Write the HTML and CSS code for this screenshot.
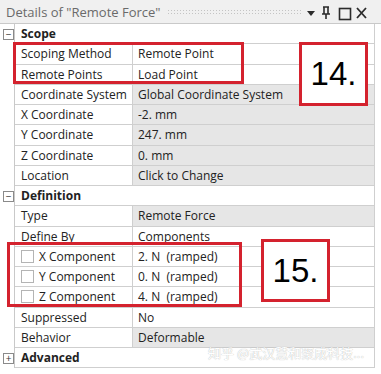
FILE: index.html
```html
<!DOCTYPE html>
<html lang="en">
<head>
    <meta charset="UTF-8">
    <title>Details of "Remote Force"</title>
    <link rel="stylesheet" href="styles.css">
</head>
<body>
    <div class="panel">
        <div class="titlebar">
            <span class="title">Details of "Remote Force"</span>
            <span class="grip"></span>
            <span class="tools">
                <svg width="66" height="16" viewBox="0 0 66 16">
                    <path d="M2 6 L10 6 L6 11 Z" fill="#2b2b2b"/>
                    <path d="M18 2 H24 M19 2 V9 M23 2 V9 M17 9 H25 M21 9 V14" stroke="#2b2b2b" stroke-width="1.6" fill="none"/>
                    <rect x="34.5" y="3.5" width="11" height="11" stroke="#2b2b2b" stroke-width="1.6" fill="none"/>
                    <path d="M52 3 L61 13 M61 3 L52 13" stroke="#2b2b2b" stroke-width="1.8" fill="none"/>
                </svg>
            </span>
        </div>

        <div class="grid">
            <div class="row head">
                <span class="gutter"><span class="toggle">&minus;</span></span>
                <span class="cell span">Scope</span>
            </div>
            <div class="row">
                <span class="gutter"></span>
                <span class="cell name">Scoping Method</span>
                <span class="cell value">Remote Point</span>
            </div>
            <div class="row">
                <span class="gutter"></span>
                <span class="cell name">Remote Points</span>
                <span class="cell value">Load Point</span>
            </div>
            <div class="row">
                <span class="gutter"></span>
                <span class="cell name">Coordinate System</span>
                <span class="cell value ro">Global Coordinate System</span>
            </div>
            <div class="row">
                <span class="gutter"></span>
                <span class="cell name">X Coordinate</span>
                <span class="cell value ro">-2. mm</span>
            </div>
            <div class="row">
                <span class="gutter"></span>
                <span class="cell name">Y Coordinate</span>
                <span class="cell value ro">247. mm</span>
            </div>
            <div class="row">
                <span class="gutter"></span>
                <span class="cell name">Z Coordinate</span>
                <span class="cell value ro">0. mm</span>
            </div>
            <div class="row">
                <span class="gutter"></span>
                <span class="cell name">Location</span>
                <span class="cell value ro">Click to Change</span>
            </div>
            <div class="row head">
                <span class="gutter"><span class="toggle">&minus;</span></span>
                <span class="cell span">Definition</span>
            </div>
            <div class="row">
                <span class="gutter"></span>
                <span class="cell name">Type</span>
                <span class="cell value ro">Remote Force</span>
            </div>
            <div class="row">
                <span class="gutter"></span>
                <span class="cell name">Define By</span>
                <span class="cell value">Components</span>
            </div>
            <div class="row">
                <span class="gutter"></span>
                <span class="cell name"><span class="check"></span>X Component</span>
                <span class="cell value">2. N  (ramped)</span>
            </div>
            <div class="row">
                <span class="gutter"></span>
                <span class="cell name"><span class="check"></span>Y Component</span>
                <span class="cell value">0. N  (ramped)</span>
            </div>
            <div class="row">
                <span class="gutter"></span>
                <span class="cell name"><span class="check"></span>Z Component</span>
                <span class="cell value">4. N  (ramped)</span>
            </div>
            <div class="row">
                <span class="gutter"></span>
                <span class="cell name">Suppressed</span>
                <span class="cell value">No</span>
            </div>
            <div class="row">
                <span class="gutter"></span>
                <span class="cell name">Behavior</span>
                <span class="cell value ro">Deformable</span>
            </div>
            <div class="row head">
                <span class="gutter"><span class="toggle">+</span></span>
                <span class="cell span">Advanced</span>
            </div>
        </div>

        <div class="mark box-a"></div>
        <div class="mark box-b">14.</div>
        <div class="mark box-c"></div>
        <div class="mark box-d">15.</div>
        <div class="watermark">知乎 @武汉慧和聚成科技...</div>
    </div>
</body>
</html>
```

FILE: styles.css
```css
/* Panel de detalles estilo Mechanical */
body {
    margin: 0;
    background-color: #fff;
    font-family: "Open Sans", "Noto Sans", sans-serif;
    color: #222;
}

.panel {
    position: relative;
    width: 381px;
    height: 374px;
    overflow: hidden;
}

.titlebar {
    display: flex;
    align-items: center;
    height: 24px;
    box-sizing: border-box;
    padding: 0 10px 0 6px;
    background-color: #f0f0f0;
    border-bottom: 1px solid #c9c9c9;
}

.title {
    font-size: 13px;
    color: #6a6a6a;
    white-space: nowrap;
}

.grip {
    flex-grow: 1;
    height: 6px;
    margin: 0 4px 0 6px;
    background-image: radial-gradient(#c4c4c4 0.6px, transparent 0.8px);
    background-size: 3px 3px;
}

.tools {
    display: flex;
    width: 66px;
    padding-top: 2px;
}

.grid {
    width: 375px;
}

.row {
    display: flex;
    height: 20.25px;
    font-size: 12px;
}

.gutter {
    display: flex;
    align-items: center;
    width: 15px;
    flex-shrink: 0;
    border-right: 1px solid #c9c9c9;
    box-sizing: border-box;
}

.toggle {
    display: flex;
    align-items: center;
    justify-content: center;
    width: 9px;
    height: 9px;
    margin-left: 3px;
    border: 1px solid #8a8a8a;
    font-size: 10px;
    line-height: 1;
    color: #333;
}

.cell {
    display: flex;
    align-items: center;
    box-sizing: border-box;
    border-bottom: 1px solid #cfcfcf;
    white-space: pre;
}

.name {
    width: 118px;
    padding-left: 6px;
    border-right: 1px solid #cfcfcf;
}

.value {
    flex-grow: 1;
    padding-left: 5px;
    border-right: 1px solid #cfcfcf;
}

.ro {
    background-color: #e6e6e6;
}

.span {
    flex-grow: 1;
    padding-left: 6px;
    font-weight: bold;
    border-right: 1px solid #cfcfcf;
}

.check {
    width: 11px;
    height: 11px;
    margin-right: 5px;
    border: 1px solid #b4b4b4;
    background-color: #fff;
    flex-shrink: 0;
}

.mark {
    position: absolute;
    box-sizing: border-box;
    border: 3px solid #d4222e;
    display: flex;
    align-items: center;
    justify-content: center;
    font-family: "Liberation Sans", Arial, sans-serif;
    font-size: 33px;
    color: #000;
}

.box-a {
    left: 13px;
    top: 42px;
    width: 231px;
    height: 42px;
}

.box-b {
    left: 299px;
    top: 42px;
    width: 69px;
    height: 64px;
    background-color: #fff;
}

.box-c {
    left: 7px;
    top: 242px;
    width: 235px;
    height: 65px;
}

.box-d {
    left: 261px;
    top: 239px;
    width: 69px;
    height: 63px;
    background-color: #fff;
}

.watermark {
    position: absolute;
    left: 208px;
    top: 343px;
    font-family: "Noto Sans CJK SC", sans-serif;
    font-size: 13px;
    color: #fff;
    text-shadow: 0 0 1px #a0a0a0;
    white-space: nowrap;
}
```
